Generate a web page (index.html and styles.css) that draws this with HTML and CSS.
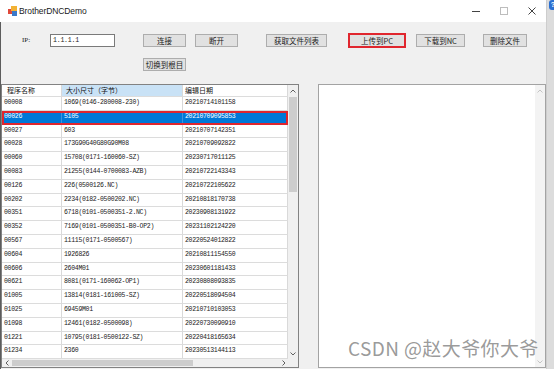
FILE: index.html
```html
<!DOCTYPE html>
<html lang="zh-CN">
<head>
<meta charset="utf-8">
<title>BrotherDNCDemo</title>
<link rel="stylesheet" href="styles.css">
</head>
<body>
<div class="screen">
  <div class="window">
    <div class="titlebar">
      <svg class="app-icon" viewBox="0 0 9 10" width="9" height="10">
        <rect x="0" y="3" width="5" height="5" fill="#e0483a"/>
        <rect x="3" y="0" width="6" height="5" fill="#f2b234"/>
        <rect x="4" y="5" width="5" height="5" fill="#3a78c8"/>
      </svg>
      <span class="title">BrotherDNCDemo</span>
      <div class="caption">
        <div class="cap-btn"><svg width="8" height="8" viewBox="0 0 8 8"><line x1="0" y1="4.5" x2="8" y2="4.5" stroke="#444" stroke-width="1"/></svg></div>
        <div class="cap-btn"><svg width="8" height="8" viewBox="0 0 8 8"><rect x="0.5" y="0.5" width="7" height="7" fill="none" stroke="#bdbdbd" stroke-width="1"/></svg></div>
        <div class="cap-btn"><svg width="8" height="8" viewBox="0 0 8 8"><path d="M0.5 0.5 L7.5 7.5 M7.5 0.5 L0.5 7.5" stroke="#444" stroke-width="1"/></svg></div>
      </div>
    </div>
    <div class="client">
      <div class="toolbar">
        <div class="tool-row">
          <span class="ip-label">IP:</span>
          <div class="ip-input">1.1.1.1</div>
          <button class="btn btn-connect">连接</button>
          <button class="btn btn-disconnect">断开</button>
          <button class="btn btn-list">获取文件列表</button>
          <button class="btn btn-upload">上传到PC</button>
          <button class="btn btn-download">下载到NC</button>
          <button class="btn btn-delete">删除文件</button>
        </div>
        <div class="tool-row tool-row-2">
          <button class="btn btn-root">切换到根目</button>
        </div>
      </div>
      <div class="panels">
        <div class="grid-view">
          <div class="grid-main">
            <div class="grid-table">
              <div class="grow ghead">
                <div class="gcell h1">程序名称</div>
                <div class="gcell h2">大小尺寸（字节）</div>
                <div class="gcell h3">编辑日期</div>
              </div>
              <div class="grow"><div class="gcell">00008</div><div class="gcell">1069(0146-280008-230)</div><div class="gcell">20210714101158</div></div>
              <div class="grow selected"><div class="gcell">00026</div><div class="gcell">5105</div><div class="gcell">20210709095853</div></div>
              <div class="grow"><div class="gcell">00027</div><div class="gcell">603</div><div class="gcell">20210707142351</div></div>
              <div class="grow"><div class="gcell">00028</div><div class="gcell">173G90G40G80G90M08</div><div class="gcell">20210709092822</div></div>
              <div class="grow"><div class="gcell">00060</div><div class="gcell">15708(0171-160060-SZ)</div><div class="gcell">20230717011125</div></div>
              <div class="grow"><div class="gcell">00083</div><div class="gcell">21255(0144-0700083-AZB)</div><div class="gcell">20210722143343</div></div>
              <div class="grow"><div class="gcell">00126</div><div class="gcell">226(0500126.NC)</div><div class="gcell">20210722105622</div></div>
              <div class="grow"><div class="gcell">00202</div><div class="gcell">2234(0182-0500202.NC)</div><div class="gcell">20210818170738</div></div>
              <div class="grow"><div class="gcell">00351</div><div class="gcell">6718(0101-0500351-2.NC)</div><div class="gcell">20230908131922</div></div>
              <div class="grow"><div class="gcell">00352</div><div class="gcell">7169(0101-0500351-B0-OP2)</div><div class="gcell">20231102124220</div></div>
              <div class="grow"><div class="gcell">00567</div><div class="gcell">11115(0171-0500567)</div><div class="gcell">20220524012822</div></div>
              <div class="grow"><div class="gcell">00604</div><div class="gcell">1926826</div><div class="gcell">20210811154550</div></div>
              <div class="grow"><div class="gcell">00606</div><div class="gcell">2604M01</div><div class="gcell">20230601181433</div></div>
              <div class="grow"><div class="gcell">00621</div><div class="gcell">8081(0171-160062-OP1)</div><div class="gcell">20230808093835</div></div>
              <div class="grow"><div class="gcell">01005</div><div class="gcell">13814(0181-161005-SZ)</div><div class="gcell">20220518094504</div></div>
              <div class="grow"><div class="gcell">01025</div><div class="gcell">69459M01</div><div class="gcell">20210710103053</div></div>
              <div class="grow"><div class="gcell">01098</div><div class="gcell">12461(0182-0500098)</div><div class="gcell">20220730090910</div></div>
              <div class="grow"><div class="gcell">01221</div><div class="gcell">10795(0181-0500122-SZ)</div><div class="gcell">20220418165634</div></div>
              <div class="grow"><div class="gcell">01234</div><div class="gcell">2360</div><div class="gcell">20230513144113</div></div>
            </div>
            <div class="vscroll">
              <div class="arrow"><svg width="6" height="4" viewBox="0 0 6 4"><polyline points="0.5,3.5 3,1 5.5,3.5" fill="none" stroke="#606060" stroke-width="1"/></svg></div>
              <div class="vthumb"></div>
              <div class="spacer"></div>
              <div class="arrow"><svg width="6" height="4" viewBox="0 0 6 4"><polyline points="0.5,0.5 3,3 5.5,0.5" fill="none" stroke="#606060" stroke-width="1"/></svg></div>
            </div>
          </div>
          <div class="hscroll">
            <div class="harrow"><svg width="4" height="6" viewBox="0 0 4 6"><polyline points="3.5,0.5 1,3 3.5,5.5" fill="none" stroke="#606060" stroke-width="1"/></svg></div>
            <div class="hthumb"></div>
            <div class="spacer"></div>
            <div class="harrow"><svg width="4" height="6" viewBox="0 0 4 6"><polyline points="0.5,0.5 3,3 0.5,5.5" fill="none" stroke="#606060" stroke-width="1"/></svg></div>
            <div class="corner"></div>
          </div>
        </div>
        <div class="text-box">
          <div class="text-area"></div>
          <div class="tb-scroll">
            <div class="arrow"><svg width="6" height="4" viewBox="0 0 6 4"><polyline points="0.5,3.5 3,1 5.5,3.5" fill="none" stroke="#c4c4c4" stroke-width="1"/></svg></div>
            <div class="arrow"><svg width="6" height="4" viewBox="0 0 6 4"><polyline points="0.5,0.5 3,3 5.5,0.5" fill="none" stroke="#c4c4c4" stroke-width="1"/></svg></div>
          </div>
        </div>
      </div>
    </div>
  </div>
  <div class="edge"><span class="help">?</span></div>
  <div class="watermark">CSDN @赵大爷你大爷</div>
</div>
</body>
</html>
```

FILE: styles.css
```css
* { box-sizing: border-box; margin: 0; padding: 0; }
html, body { width: 554px; height: 369px; overflow: hidden; background: #e4e4e4; }
body { font-family: "Noto Sans CJK SC", sans-serif; color: #000; }

.screen { position: relative; display: flex; width: 554px; height: 369px; }
.window { width: 546px; height: 369px; display: flex; flex-direction: column; background: #f0f0f0; }

.titlebar { height: 22px; flex: none; background: #fff; display: flex; align-items: center; padding-left: 8px; }
.app-icon { display: block; }
.title { margin-left: 2px; font: 8.5px/1 "Liberation Sans", Arial, sans-serif; color: #1a1a1a; letter-spacing: -0.1px; }
.caption { margin-left: auto; display: flex; }
.cap-btn { width: 28px; height: 22px; display: flex; align-items: center; justify-content: center; }
.cap-btn svg { display: block; }

.client { flex: 1; border-left: 1px solid #5c5c5c; display: flex; flex-direction: column; }
.toolbar { padding-top: 12px; }
.tool-row { display: flex; align-items: center; height: 13px; padding-left: 21px; }
.tool-row-2 { margin-top: 11px; padding-left: 142px; }

.ip-label { width: 28px; font: 7px/13px "Liberation Serif", "Noto Sans CJK SC", serif; color: #222; }
.ip-input { width: 65px; height: 13px; background: #fff; border: 1px solid #7a7a7a; padding-left: 2px; font: 6.5px/11px "Liberation Mono", monospace; letter-spacing: -0.2px; color: #222; }

.btn { height: 13px; background: #e1e1e1; border: 1px solid #adadad; font: 7.5px/11px "Noto Sans CJK SC", sans-serif; color: #1a1a1a; text-align: center; padding: 0; flex: none; }
.btn-connect { margin-left: 28px; width: 43px; }
.btn-disconnect { margin-left: 9px; width: 43px; }
.btn-list { margin-left: 28px; width: 61px; }
.btn-upload { margin-left: 22px; width: 56px; outline: 2px solid #e0262e; outline-offset: -1px; }
.btn-download { margin-left: 11px; width: 49px; }
.btn-delete { margin-left: 18px; width: 44px; }
.btn-root { width: 43px; }

.panels { margin-top: 13px; height: 284px; display: flex; }

.grid-view { width: 298px; height: 284px; border: 1px solid #828282; background: #fff; display: flex; flex-direction: column; }
.grid-main { height: 274px; display: flex; }
.grid-table { width: 286px; overflow: hidden; }
.grow { display: grid; grid-template-columns: 60px 121px 105px; height: 13.8px; font: 6.5px/12.8px "Liberation Mono", "Noto Sans CJK SC", monospace; letter-spacing: -0.3px; color: #222; }
.gcell { border-right: 1px solid #d9d9d9; border-bottom: 1px solid #dcdcdc; padding-left: 2px; white-space: nowrap; overflow: hidden; }
.ghead { height: 12px; font: 7px/11px "Noto Sans CJK SC", sans-serif; letter-spacing: 0; color: #111; }
.ghead .h1 { padding-left: 5px; }
.ghead .h2 { padding-left: 4px; background: #c9e2f6; }
.ghead .h3 { padding-left: 2px; }
.selected { background: #0078d7; color: #fff; outline: 2px solid #e0262e; outline-offset: -2px; position: relative; }
.selected .gcell { border-color: #3b93df; }

.vscroll { width: 10px; background: #f0f0f0; display: flex; flex-direction: column; }
.arrow { height: 11px; display: flex; align-items: center; justify-content: center; flex: none; }
.arrow svg, .harrow svg { display: block; }
.vthumb { height: 95px; margin: 1px 1px 0; background: #cdcdcd; flex: none; }
.spacer { flex: 1; }

.hscroll { height: 8px; background: #f0f0f0; display: flex; }
.harrow { width: 9px; display: flex; align-items: center; justify-content: center; flex: none; }
.hthumb { width: 181px; margin: 1px 0 1px 1px; background: #cdcdcd; flex: none; }
.corner { width: 10px; background: #f0f0f0; flex: none; }

.text-box { margin-left: 19px; width: 228px; height: 284px; border: 1px solid #a3a3a3; background: #fff; display: flex; }
.text-area { flex: 1; }
.tb-scroll { width: 10px; background: #f3f3f3; display: flex; flex-direction: column; justify-content: space-between; }

.edge { width: 8px; height: 369px; background: #dcdcdc; border-left: 1px solid #cdcdcd; position: relative; }
.help { position: absolute; left: 2px; top: 0; width: 8px; height: 10px; border-radius: 3px; background: #2a6fd1; color: #fff; font: bold 7px/10px "Liberation Sans", Arial, sans-serif; text-align: center; }

.watermark { position: absolute; left: 348px; top: 338px; font: 19px/19px "Noto Sans CJK SC", sans-serif; letter-spacing: 0.4px; color: rgba(128,128,128,0.8); white-space: nowrap; }
```
